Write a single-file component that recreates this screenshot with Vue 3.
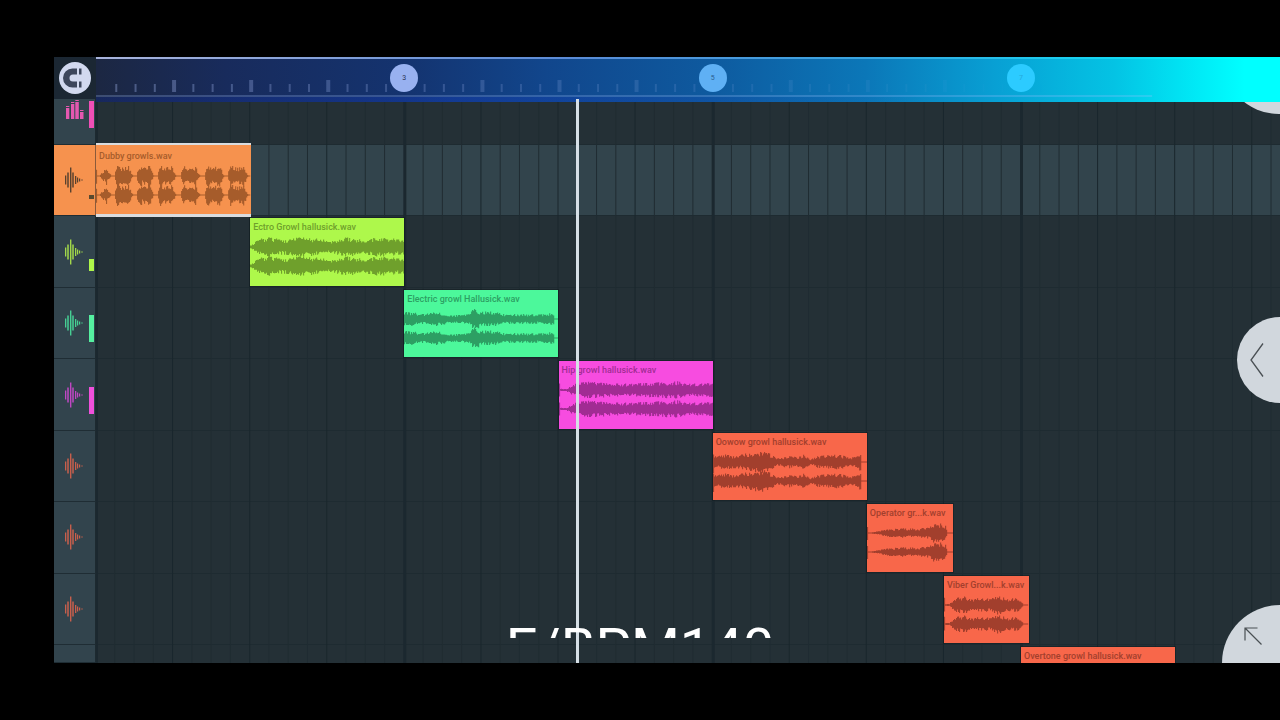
<template>
  <main class="page">
    <section class="playlist">
      <header class="top">
        <div class="corner">
          <button class="snap" type="button" aria-label="Snap" @click="snap = !snap">
            <svg viewBox="0 0 32 32" width="32" height="32">
              <path d="M18 6.500H13.500a9.500 9.500 0 0 0 0 19H18v-6h-4a3.500 3.500 0 0 1 0-7h4z" fill="#3d475c" />
              <path d="M20 6.500h2.500v6h-2.500zM20 19.500h2.500v6h-2.500z" fill="#3d475c" />
            </svg>
          </button>
        </div>
        <div class="ruler">
          <svg class="ticks" width="100%" height="100%">
            <rect
              v-for="t in ticks"
              :key="t.x"
              :x="t.x + '%'"
              :y="t.major ? 23 : 27"
              :width="t.major ? 4 : 2"
              :height="t.major ? 12 : 8"
              :transform="t.major ? 'translate(-1 0)' : 'translate(0 0)'"
              :fill-opacity="t.alpha"
              fill="#a9bdf5"
            />
            <rect x="0" y="38" width="89.2%" height="2" fill="#9fc0ff" fill-opacity=".25" />
          </svg>
          <span
            v-for="m in markers"
            :key="m.bar"
            class="marker"
            :style="{ left: pct(m.bar - 1), background: m.bg, color: m.fg }"
          >{{ m.bar }}</span>
        </div>
      </header>

      <div class="body">
        <div class="heads">
          <div
            v-for="(t, i) in tracks"
            :key="i"
            class="head"
            :class="{ active: t.active }"
            :style="{ color: t.icon }"
          >
            <svg v-if="i === 0" class="bars" viewBox="0 0 18 20" width="18" height="20" fill="currentColor">
              <path d="M0 9h3.300v11H0zM5 5h3.300v15H5zM9.300 3h3.500v17H9.300zM14 13h3.500v7h-3.500z" />
              <path d="M0 7h3.300v1H0zM5 3h3.300v1H5zM9.300 1h3.500v1H9.300zM14 11h3.500v1h-3.500z" />
            </svg>
            <svg v-else-if="i < 8" class="wave-icon" viewBox="0 0 20 26" width="20" height="26" fill="currentColor">
              <rect
                v-for="b in iconBars"
                :key="b[0]"
                :x="b[0]"
                :y="13 - b[2] / 2"
                :width="b[1]"
                :height="b[2]"
                :opacity="b[3]"
              />
            </svg>
            <i v-if="t.level" class="meter" :style="{ height: t.level + 'px', background: t.meter }"></i>
          </div>
        </div>

        <div class="lanes">
          <svg class="grid" width="100%" height="100%">
            <rect
              v-for="l in lines"
              :key="l.x"
              :x="l.x + '%'"
              y="0"
              :width="l.w"
              height="100%"
              transform="translate(-1 0)"
              :fill="l.fill"
            />
          </svg>
          <div v-for="(t, i) in tracks" :key="i" class="lane" :class="{ active: t.active, last: i === tracks.length - 1 }">
            <article
              v-if="t.clip"
              class="clip"
              :class="{ selected: t.active }"
              :style="{ marginLeft: pct(t.clip.start), width: pct(t.clip.len), '--clip': t.color, color: t.dark }"
            >
              <h2>{{ t.clip.name }}</h2>
              <svg
                v-if="t.clip.env"
                class="wave"
                :viewBox="`0 0 ${t.clip.len * 154} 40`"
                preserveAspectRatio="none"
                fill="currentColor"
              >
                <path :d="wave(t.clip, 10, i)" />
                <path :d="wave(t.clip, 29, i)" />
              </svg>
            </article>
          </div>
          <div class="playhead" :style="{ left: pct(3.118) }"></div>
        </div>
      </div>

      <button class="round corner-top" type="button" aria-label="Menu"></button>
      <button class="round side" type="button" aria-label="Open panel">
        <svg viewBox="0 0 14 36" width="14" height="36" fill="none" stroke="#4a5054" stroke-width="1.3">
          <path d="M13 1.500L1 18l12 16.500" />
        </svg>
      </button>
      <button class="round corner-bottom" type="button" aria-label="Zoom out">
        <svg viewBox="0 0 18 18" width="18" height="18" fill="none" stroke="#4a5054" stroke-width="1.200">
          <path d="M1 13.500V1h12.500M1 1l16.500 16.500" />
        </svg>
      </button>
    </section>
    <p class="caption">E/BPM140</p>
  </main>
</template>

<script setup>
import { ref } from 'vue'

const snap = ref(true)

// bars that fit across the timeline
const BARS = 7.68
const pct = bars => (bars / BARS) * 100 + '%'

const markers = [
  { bar: 3, bg: '#98b1f0', fg: '#28324e' },
  { bar: 5, bg: '#5fb0f4', fg: '#2a5c90' },
  { bar: 7, bg: '#2ccbff', fg: '#24a9dc' },
]

// x, width, height, opacity
const iconBars = [
  [1, 1.3, 9, 1],
  [3, 2, 15, 0.75],
  [6, 1.4, 25, 1],
  [8, 2, 15, 0.75],
  [11, 1.3, 8, 1],
  [13, 1.2, 5, 1],
  [15, 1.2, 3, 1],
  [17, 2, 1, 0.7],
]

const ticks = []
const lines = []
for (let k = 0; k < BARS * 8; k++) {
  const x = (k / 8 / BARS) * 100
  const alpha = Math.max(0, 0.36 - k * 0.0072)
  if (k > 0 && k % 16) ticks.push({ x, major: k % 4 === 0, alpha })
  const big = k % 16 === 0
  lines.push({
    x,
    w: big ? 3 : 1,
    fill: big ? '#1b282f' : k % 4 === 0 ? '#1a272d' : '#202c32',
  })
}

// [x, amplitude] points along each clip
const blobs = []
const groups = [[3, 15, 5], [19, 36, 9], [41, 57, 9], [62, 79, 9], [85, 103, 8], [109, 127, 9], [132, 151, 9]]
blobs.push([0, 9], [1, 0.5])
groups.forEach(([a, b, h], i) => {
  if (i === 0) blobs.push([a, 0.5], [8, 5], [10, 9], [11, 5], [b, 0.5])
  else blobs.push([a - 1, 0.5], [a, 4], [a + 2, h + 1], [a + 5, h - 2], [(a + b) / 2, h - 2], [b - 4, h], [b, 1], [b + 1, 0.5])
})
blobs.push([154, 0.5])

const tracks = [
  { icon: '#e558b0', meter: '#f04fb6', level: 27 },
  {
    active: true, icon: '#59422f', meter: '#594a2f', level: 4, color: '#f6924e', dark: '#a65c2b',
    clip: { name: 'Dubby growls.wav', start: 0, len: 1.005, env: blobs },
  },
  {
    icon: '#a2d84a', meter: '#aef64a', level: 12, color: '#aef84b', dark: '#6fa02c',
    clip: {
      name: 'Ectro Growl hallusick.wav', start: 1, len: 1,
      env: [[0, 2], [3, 2], [7, 7], [20, 8], [32, 6], [50, 8], [65, 7], [80, 5], [97, 8], [112, 6], [130, 8], [154, 6]],
    },
  },
  {
    icon: '#46cf94', meter: '#55f0a0', level: 27, color: '#4cf89b', dark: '#2d9f63',
    clip: {
      name: 'Electric growl Hallusick.wav', start: 2, len: 1,
      env: [[0, 6], [12, 5], [20, 4], [32, 6], [48, 3], [65, 4], [69, 9], [72, 9], [76, 6], [90, 6], [100, 4], [140, 4], [149, 5], [150, 0.5], [154, 0.5]],
    },
  },
  {
    icon: '#c047c4', meter: '#f050dc', level: 27, color: '#f74ce0', dark: '#a12c93',
    clip: {
      name: 'Hip growl hallusick.wav', start: 3, len: 1,
      env: [[0, 8], [1, 1], [7, 1], [14, 5], [28, 7], [45, 6], [70, 5], [90, 6], [118, 7], [128, 5], [154, 6]],
    },
  },
  {
    icon: '#c85f4c', color: '#f8674a', dark: '#a23f2d',
    clip: {
      name: 'Oowow growl hallusick.wav', start: 4, len: 1,
      env: [[0, 9], [2, 5], [12, 6], [24, 5], [36, 8], [52, 9], [58, 6], [64, 3], [76, 5], [83, 4], [90, 6], [97, 2], [104, 5], [125, 6], [138, 4], [144, 5], [147, 8], [148, 0.5], [154, 0.5]],
    },
  },
  {
    icon: '#c85f4c', color: '#f8674a', dark: '#a23f2d',
    clip: {
      name: 'Operator gr...k.wav', start: 5, len: 0.56,
      env: [[0, 7], [1, 0.5], [6, 0.7], [20, 3], [34, 4], [50, 3.5], [61, 4.5], [67, 9], [72, 8], [78, 6], [80, 0.5], [86, 0.5]],
    },
  },
  {
    icon: '#c85f4c', color: '#f8674a', dark: '#a23f2d',
    clip: {
      name: 'Viber Growl...k.wav', start: 5.5, len: 0.55,
      env: [[0, 8], [1, 0.8], [5, 1], [12, 6], [20, 7], [28, 5], [38, 6], [46, 5], [54, 8], [62, 5], [74, 6], [78, 2], [79, 0.5], [85, 0.5]],
    },
  },
  {
    color: '#f8674a', dark: '#a23f2d',
    clip: { name: 'Overtone growl hallusick.wav', start: 6, len: 1 },
  },
]

function ampAt(env, x) {
  for (let i = 1; i < env.length; i++) {
    const [x1, a1] = env[i - 1]
    const [x2, a2] = env[i]
    if (x <= x2) return a1 + ((a2 - a1) * (x - x1)) / (x2 - x1 || 1)
  }
  return env[env.length - 1][1]
}

// one thin column per pixel, with repeatable noise on its height
function wave(clip, mid, seed) {
  let s = seed * 7919 + 13
  const rnd = () => {
    s = (s * 16807) % 2147483647
    return s / 2147483647
  }
  let d = ''
  const w = Math.floor(clip.len * 154)
  for (let x = 0; x < w; x++) {
    const a = ampAt(clip.env, x)
    const up = a < 1 ? a : a * (0.65 + rnd() * 0.6)
    const down = a < 1 ? a : a * (0.65 + rnd() * 0.6)
    d += `M${x} ${(mid - up).toFixed(1)}h1.100V${(mid + down).toFixed(1)}h-1.100z`
  }
  return d
}
</script>

<style>
body {
  margin: 0;
  background: #000;
}
</style>

<style scoped>
.page {
  position: relative;
  box-sizing: border-box;
  display: flex;
  height: 100vh;
  padding: 57px 0 57px 54px;
  background: #000;
  font-family: Roboto, "Liberation Sans", sans-serif;
  overflow: hidden;
}
.playlist {
  position: relative;
  flex: 1;
  display: flex;
  flex-direction: column;
  min-width: 0;
  background: #243036;
  overflow: hidden;
}
button {
  border: none;
  padding: 0;
  cursor: pointer;
}

.top {
  position: relative;
  z-index: 4;
  flex: none;
  display: flex;
  align-items: flex-start;
  height: 42px;
}
.corner {
  display: flex;
  align-items: center;
  justify-content: center;
  width: 42px;
  height: 42px;
  background: #1b2733;
}
.snap {
  display: flex;
  width: 32px;
  height: 32px;
  border-radius: 50%;
  background: #d2d9ef;
}
.ruler {
  position: relative;
  box-sizing: border-box;
  flex: 1;
  height: 45px;
  background:
    linear-gradient(90deg, #a9b4dc, #5b8bd6 40%, #3aa5e0 65%, #10dcf4 88%, #00ffff 96%) top / 100% 2px no-repeat,
    linear-gradient(90deg, rgba(20, 40, 110, .6), rgba(18, 60, 180, .45) 30%, transparent 70%) bottom / 100% 5px no-repeat,
    linear-gradient(90deg, #1c2742 0%, #182b5c 11%, #14336f 26%, #11468c 38%, #0e5a9f 52%, #0b77b8 65%, #08a0d4 76%, #04c3e4 86%, #00eaf6 93%, #00ffff 97%);
}
.ticks {
  display: block;
}
.marker {
  position: absolute;
  top: 7px;
  width: 28px;
  height: 28px;
  margin-left: -14px;
  border-radius: 50%;
  font-size: 7px;
  line-height: 28px;
  text-align: center;
}

.body {
  flex: 1;
  display: flex;
  min-height: 0;
}
.heads,
.lanes {
  display: grid;
  grid-template-rows: 46px repeat(7, minmax(0, 4fr)) minmax(0, 1fr);
}
.heads {
  width: 42px;
}
.head {
  box-sizing: border-box;
  display: flex;
  align-items: center;
  justify-content: space-between;
  min-height: 0;
  padding: 0 1px 0 10px;
  border-right: 1px solid #1d2a30;
  border-bottom: 1px solid #1f2d34;
  background: #32444d;
  overflow: hidden;
}
.head.active {
  border-right-color: #8a5a3a;
  background: #f6924e;
}
.bars {
  align-self: flex-start;
  margin-left: 2px;
}
.wave-icon {
  flex: none;
}
.meter {
  align-self: flex-end;
  width: 5px;
  margin: 0 0 16px auto;
}

.lanes {
  position: relative;
  flex: 1;
  min-width: 0;
}
.grid {
  position: absolute;
  inset: 0;
}
.lane {
  box-sizing: border-box;
  min-height: 0;
  padding: 2px 0 1px;
  border-bottom: 1px solid #1e2b31;
}
.lane.active {
  background: #32444c;
}
.lane.last {
  padding-bottom: 0;
  border-bottom: none;
}
.clip {
  position: relative;
  box-sizing: border-box;
  height: 100%;
  background: var(--clip);
  box-shadow: 0 0 0 1px rgba(12, 22, 26, .4);
  overflow: hidden;
}
.clip.selected {
  box-shadow: 0 -2px 0 var(--clip), 0 -4px 0 #d9dcdf, 0 3px 0 #d9dcdf;
}
.clip h2 {
  margin: 0;
  padding: 3px 0 0 3px;
  font-size: 9px;
  font-weight: 500;
  line-height: 12px;
  white-space: nowrap;
}
.wave {
  display: block;
  width: 100%;
  height: 40px;
  margin-top: 4px;
}
.playhead {
  position: absolute;
  top: 0;
  bottom: 0;
  z-index: 5;
  width: 3px;
  margin-left: -1px;
  background: #d6dfe6;
}

.round {
  position: absolute;
  right: 0;
  z-index: 3;
  background: #d1d7dd;
}
.corner-top {
  top: 0;
  width: 58px;
  height: 57px;
  border-bottom-left-radius: 58px;
}
.side {
  top: 50%;
  display: flex;
  align-items: center;
  width: 43px;
  height: 86px;
  margin-top: -43px;
  padding-left: 13px;
  border-radius: 43px 0 0 43px;
}
.corner-bottom {
  bottom: 0;
  display: flex;
  width: 58px;
  height: 58px;
  padding: 22px 0 0 22px;
  border-top-left-radius: 58px;
}
.caption {
  position: absolute;
  left: 0;
  right: 0;
  bottom: 82px;
  z-index: 6;
  height: 18px;
  margin: 0;
  color: #fff;
  font-size: 56px;
  line-height: 58px;
  text-align: center;
  overflow: hidden;
}
</style>
